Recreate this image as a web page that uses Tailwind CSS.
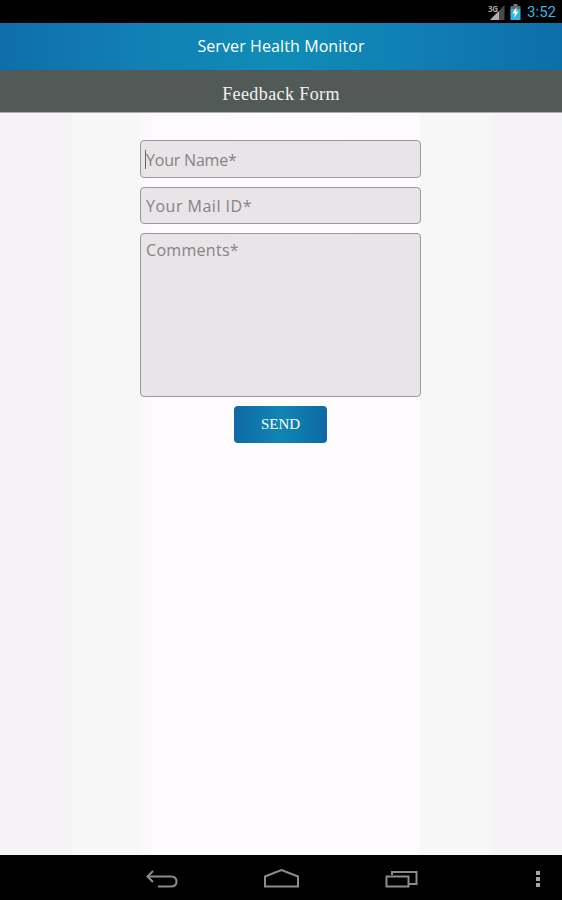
<!DOCTYPE html>
<html>
<head>
<meta charset="utf-8">
<title>Feedback Form</title>
<script src="https://cdn.jsdelivr.net/npm/@tailwindcss/browser@4"></script>
</head>
<body class="bg-black">
<div class="flex flex-col w-[562px] h-[900px] overflow-hidden font-['Open_Sans',sans-serif]">

  <!-- status bar -->
  <div class="h-[23px] bg-black flex items-center justify-end pr-[6px] shrink-0">
    <div class="relative w-[17px] h-[20px] mr-[5px] mt-[1px]">
      <span class="absolute left-0 top-[3px] text-[8px] leading-[8px] font-bold tracking-[-0.3px] text-[#a0a0a0]">3G</span>
      <svg class="absolute left-0 top-0" width="17" height="20" viewBox="0 0 17 20"><polygon points="16.500,3 16.500,18 2,18" fill="#4a4a4a"/><polygon points="11,9 11,18 2,18" fill="#b0b0b0"/></svg>
    </div>
    <svg class="mr-[6px]" width="11" height="16" viewBox="0 0 11 16"><rect x="3.500" y="0" width="4" height="2" fill="#777"/><rect x="0.500" y="2" width="10" height="3" fill="#666"/><rect x="0.500" y="5" width="10" height="11" fill="#33b5e5"/><polygon points="6.500,3 2.500,9.500 5,9.500 4,14 8.500,7.500 6,7.500" fill="#fff"/></svg>
    <span class="text-[15px] leading-[20px] text-[#33b5e5] font-['Roboto',sans-serif]">3:52</span>
  </div>

  <!-- action bar -->
  <div class="h-[47px] shrink-0 flex items-center justify-center pb-[1px] bg-[linear-gradient(90deg,#0f6ea9_0%,#1180b4_25%,#0f8cb6_50%,#1080b4_72%,#0e6ea8_100%)]">
    <h1 class="text-[16px] tracking-[0.1px] text-white">Server Health Monitor</h1>
  </div>

  <!-- page title -->
  <div class="h-[43px] shrink-0 flex items-center justify-center pt-[6px] bg-[#525a58] border-b border-[#a9adac]">
    <h2 class="text-[18px] text-[#f2f2f2] font-['Liberation_Serif',serif] tracking-[0.4px]">Feedback Form</h2>
  </div>

  <!-- form -->
  <form class="flex-1 flex flex-col items-center pt-[27px] pr-[1px] bg-[linear-gradient(90deg,#f6f3f7_0px,#f6f3f7_72px,#f7f7f7_72px,#f7f7f7_140px,#fbf9fb_140px,#fbf9fb_152px,#fefbfe_152px,#fefbfe_228px,#fffcff_228px,#fffcff_350px,#fefbfe_350px,#fefbfe_420px,#f7f7f7_420px,#f7f7f7_492px,#f6f3f7_492px)]">
    <div class="relative">
      <input class="block w-[281px] h-[38px] px-[5px] pt-[1px] rounded-[4px] border border-[#9a9a9c] bg-[#e8e4e7] text-[16px] text-[#555] placeholder:text-[#858385] placeholder:tracking-[-0.2px] outline-none" placeholder="Your Name*">
      <span class="absolute left-[5px] top-[10px] w-[1px] h-[19px] bg-[#666]"></span>
    </div>
    <input class="w-[281px] h-[37px] mt-[9px] px-[5px] rounded-[4px] border border-[#9a9a9c] bg-[#e8e4e7] text-[16px] text-[#555] placeholder:text-[#858385] placeholder:tracking-[0.5px] outline-none" placeholder="Your Mail ID*">
    <textarea class="w-[281px] h-[164px] mt-[9px] px-[5px] py-[4px] rounded-[4px] border border-[#9a9a9c] bg-[#e8e4e7] text-[16px] leading-[24px] text-[#555] placeholder:text-[#858385] placeholder:tracking-[0.3px] outline-none resize-none" placeholder="Comments*"></textarea>
    <button type="button" class="w-[93px] h-[37px] mt-[9px] rounded-[4px] text-[15px] text-white font-['Liberation_Serif',serif] bg-[linear-gradient(90deg,#0f69a6_0%,#1086b2_50%,#0e69a6_100%)]">SEND</button>
  </form>

  <!-- nav bar -->
  <div class="h-[45px] shrink-0 bg-black relative">
    <svg class="absolute left-[146px] top-[15px]" width="32" height="18" viewBox="0 0 32 18" fill="none" stroke="#8c8c8c" stroke-width="2"><path d="M1 6.500H25Q30.500 6.500 30.500 11.500T25 16.500H12"/><path d="M7 1L1.500 6.500L7 12"/></svg>
    <svg class="absolute left-[264px] top-[14px]" width="35" height="19" viewBox="0 0 35 19" fill="none" stroke="#8c8c8c" stroke-width="2"><path d="M1 7.500L17.500 1L34 7.500V17.500H1Z"/></svg>
    <svg class="absolute left-[385px] top-[15px]" width="33" height="18" viewBox="0 0 33 18" fill="none" stroke="#8c8c8c" stroke-width="2"><rect x="1.500" y="6.500" width="22" height="10"/><path d="M7 5V2H31.500V14H24"/></svg>
    <div class="absolute left-[536px] top-[16px] flex flex-col gap-[2px]">
      <span class="w-[4px] h-[4px] bg-[#a5a5a5]"></span>
      <span class="w-[4px] h-[4px] bg-[#a5a5a5]"></span>
      <span class="w-[4px] h-[4px] bg-[#a5a5a5]"></span>
    </div>
  </div>
</div>
</body>
</html>
